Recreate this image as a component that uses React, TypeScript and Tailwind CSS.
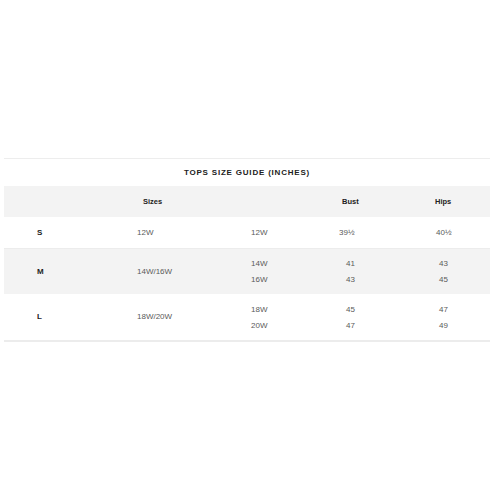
const rows = [
  { size: "S", range: "12W", sub: ["12W"], bust: ["39½"], hips: ["40½"], gray: false, h: "h-[32px]" },
  { size: "M", range: "14W/16W", sub: ["14W", "16W"], bust: ["41", "43"], hips: ["43", "45"], gray: true, h: "h-[45px]" },
  { size: "L", range: "18W/20W", sub: ["18W", "20W"], bust: ["45", "47"], hips: ["47", "49"], gray: false, h: "h-[47px]" },
];

function Stack({ items }: { items: string[] }) {
  return (
    <div className="flex flex-col gap-[7px]">
      {items.map((v) => (
        <span key={v} className="leading-[9px]">
          {v}
        </span>
      ))}
    </div>
  );
}

export default function App() {
  return (
    <div className="h-[500px] w-[500px] bg-white pl-[4px] pr-[10px] pt-[158px] font-['Liberation_Sans',Arial,sans-serif]">
      <div className="border-b border-[#ececec]">
        <div className="flex h-[28px] items-center justify-center border-t border-[#ededed] text-[8px] font-bold tracking-[0.8px] text-[#222]">
          TOPS SIZE GUIDE (INCHES)
        </div>
        <div className="grid h-[31px] grid-cols-[133px_114px_88px_96px_1fr] items-center bg-[#f3f3f3] text-[7.5px] font-bold text-[#222]">
          <span />
          <span className="pl-[6px]">Sizes</span>
          <span />
          <span className="pl-[3px]">Bust</span>
          <span>Hips</span>
        </div>
        {rows.map((r) => {
          const multi = r.sub.length > 1;
          return (
            <div
              key={r.size}
              className={`grid grid-cols-[133px_114px_88px_96px_1fr] items-center text-[8px] text-[#5a5a5a] ${r.h} ${
                r.gray ? "bg-[#f3f3f3]" : "border-b border-[#ececec] bg-white"
              }`}
            >
              <span className="pl-[33px] font-bold text-[#222]">{r.size}</span>
              <span>{r.range}</span>
              <Stack items={r.sub} />
              <div className={multi ? "pl-[7px]" : ""}>
                <Stack items={r.bust} />
              </div>
              <div className={multi ? "pl-[4px]" : "pl-[1px]"}>
                <Stack items={r.hips} />
              </div>
            </div>
          );
        })}
      </div>
    </div>
  );
}
